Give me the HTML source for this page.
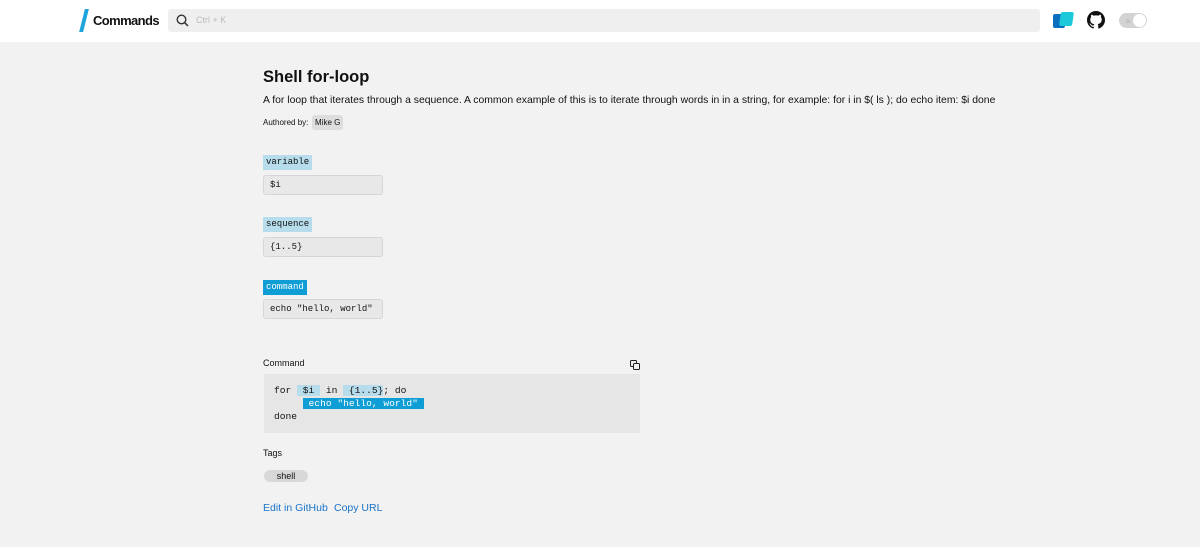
<!DOCTYPE html><html><head><style>
body{margin:0;width:1200px;height:547px;background:#f2f2f2;font-family:"Liberation Sans",sans-serif;color:#111;position:relative;overflow:hidden}
.hdr{position:absolute;left:0;top:0;width:1200px;height:42px;background:#fff}
.a{position:absolute}
.mono{font-family:"Liberation Mono",monospace}
.lbl{position:absolute;left:263px;height:15px;font-size:9px;line-height:15px;padding:0 3px;font-family:"Liberation Mono",monospace}
.inp{position:absolute;left:263px;width:112px;height:18px;border:1px solid #d6d6d6;border-radius:3px;background:#e8e8e8;font-size:9px;line-height:18px;padding-left:6px;font-family:"Liberation Mono",monospace}
</style></head><body>
<div class="hdr">
<div class="a" style="left:82px;top:9px;width:4px;height:23px;background:#1fa3db;transform:skewX(-14deg)"></div>
<div class="a" style="left:93px;top:13px;font-size:13px;font-weight:bold;letter-spacing:-0.6px">Commands</div>
<div class="a" style="left:168px;top:9px;width:872px;height:23px;background:#efefef;border-radius:3px"></div>
<svg class="a" style="left:176px;top:14px" width="13" height="13" viewBox="0 0 13 13"><circle cx="5.5" cy="5.5" r="4.3" fill="none" stroke="#333" stroke-width="1.4"/><path d="M8.7 8.7L12 12" stroke="#333" stroke-width="1.5"/></svg>
<div class="a" style="left:196px;top:15px;font-size:9px;color:#bbb">Ctrl + K</div>
<div class="a" style="left:1053px;top:14px;width:12px;height:14px;background:#0a6fbf;border-radius:2px"></div>
<div class="a" style="left:1060px;top:12px;width:13px;height:14px;background:#1cc9d9;border-radius:2px;transform:skewX(-8deg)"></div>
<svg class="a" style="left:1087px;top:11px" width="18" height="18" viewBox="0 0 16 16"><path fill="#111" d="M8 0C3.580 0 0 3.58 0 8c0 3.54 2.29 6.53 5.47 7.59.4.07.55-.17.55-.38v-1.33c-2.23.48-2.7-1.070-2.7-1.07-.36-.92-.89-1.17-.89-1.17-.73-.5.06-.49.06-.49.8.06 1.23.83 1.23.83.71 1.22 1.87.87 2.33.66.07-.52.28-.87.5-1.07-1.78-.2-3.64-.89-3.64-3.95 0-.87.31-1.59.83-2.15-.08-.2-.36-1.02.08-2.12 0 0 .67-.21 2.2.82A7.7 7.7 0 0 1 8 3.86c.68 0 1.36.09 2 .27 1.53-1.04 2.2-.82 2.2-.82.44 1.1.16 1.92.08 2.12.51.56.82 1.270.82 2.15 0 3.07-1.87 3.75-3.65 3.95.29.25.54.73.54 1.48v2.2c0 .21.15.46.55.38A8 8 0 0 0 16 8c0-4.42-3.58-8-8-8z"/></svg>
<div class="a" style="left:1119px;top:13px;width:28px;height:15px;background:#d3d3d3;border-radius:8px"></div>
<div class="a" style="left:1133px;top:14px;width:13px;height:13px;background:#fff;border-radius:50%"></div>
<div class="a" style="left:1124px;top:16px;font-size:8px;color:#999">☼</div>
</div>
<div class="a" style="left:263px;top:68px;font-size:16.5px;font-weight:bold">Shell for-loop</div>
<div class="a" style="left:263px;top:95px;font-size:10.4px">A for loop that iterates through a sequence. A common example of this is to iterate through words in in a string, for example: for i in $( ls ); do echo item: $i done</div>
<div class="a" style="left:263px;top:118px;font-size:8px">Authored by:</div>
<div class="a" style="left:312px;top:115px;font-size:8px;background:#ddd;border-radius:3px;padding:3px 3px">Mike G</div>
<div class="lbl" style="top:155px;background:#b7dcec">variable</div>
<div class="inp" style="top:175px">$i</div>
<div class="lbl" style="top:217px;background:#b7dcec">sequence</div>
<div class="inp" style="top:237px">{1..5}</div>
<div class="lbl" style="top:280px;background:#0f9dd6;color:#fff">command</div>
<div class="inp" style="top:299px">echo "hello, world"</div>
<div class="a" style="left:263px;top:358px;font-size:9px">Command</div>
<svg class="a" style="left:630px;top:360px" width="10" height="10" viewBox="0 0 10 10"><rect x="0.5" y="0.5" width="6" height="6" rx="1" fill="none" stroke="#222"/><rect x="3.5" y="3.5" width="6" height="6" rx="1" fill="#f2f2f2" stroke="#222"/></svg>
<div class="a" style="left:264px;top:374px;width:376px;height:59px;background:#e6e6e6"></div>
<div class="a mono" style="left:274px;top:384px;font-size:9.6px;line-height:13px;white-space:pre">for <span style="background:#b7dcec"> $i </span> in <span style="background:#b7dcec"> {1..5}</span>; do
     <span style="background:#0f9dd6;color:#fff"> echo "hello, world" </span>
done</div>
<div class="a" style="left:263px;top:448px;font-size:9px">Tags</div>
<div class="a" style="left:264px;top:470px;width:44px;height:12px;background:#d8d8d8;border-radius:6px;font-size:9px;line-height:12px;text-align:center">shell</div>
<div class="a" style="left:263px;top:502px;font-size:10.5px;color:#1a73c9">Edit in GitHub</div>
<div class="a" style="left:334px;top:502px;font-size:10.5px;color:#1a73c9">Copy URL</div>
</body></html>
